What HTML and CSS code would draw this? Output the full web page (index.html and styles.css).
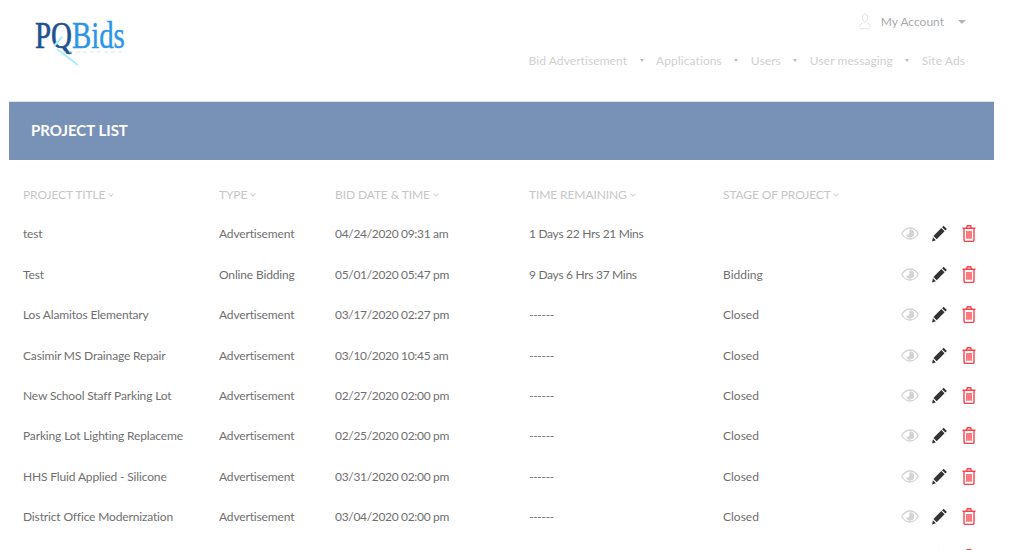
FILE: index.html
```html
<!DOCTYPE html>
<html lang="en">
<head>
<meta charset="utf-8">
<title>Project List</title>
<link rel="stylesheet" href="styles.css">
</head>
<body>
<svg class="sprite" width="0" height="0" aria-hidden="true">
  <symbol id="eye" viewBox="0 0 18 13">
    <path d="M.7 6.500C2.800 2.900 5.700 1 9 1s6.200 1.900 8.300 5.500C15.200 10.100 12.300 12 9 12S2.800 10.100.7 6.500z" fill="none" stroke="currentColor" stroke-width="1.300"/>
    <path d="M9 2.300a4.200 4.200 0 1 1-4 5.500c1.900.3 3.300-.7 3.400-2.400.1-1.100-.2-2.200.6-3.100z" fill="currentColor"/>
  </symbol>
  <symbol id="pencil" viewBox="0 0 16 17">
    <path d="M11.600.8l3.300 3.200-1.500 1.500-3.300-3.200zM9.300 3.100l3.300 3.200-7.900 8-3.300-3.200zM.9 12.300l3 2.900-3.800 1.300z" fill="currentColor"/>
  </symbol>
  <symbol id="trash" viewBox="0 0 14 17">
    <path d="M.5 3.300h13M4.600 3.100l.7-2.300h3.400l.7 2.300M2 3.600v11.500c0 .8.500 1.300 1.200 1.300h7.600c.7 0 1.200-.5 1.200-1.300V3.600M5 6v7.800M7 6v7.800M9 6v7.800" fill="none" stroke="currentColor" stroke-width="1.400"/>
  </symbol>
</svg>

<header class="site-header">
  <a class="logo" href="#">
    <span class="logo-text"><span class="logo-pq">PQ</span><span class="logo-bids">Bids</span></span>
    <svg class="logo-glass" width="80" height="34" viewBox="0 0 80 34" aria-hidden="true">
      <path d="M12 2 4 11M7 14 28 30" stroke="#a9eef8" stroke-width="2" fill="none"/>
      <path d="M12 17H76" stroke="#d5e6f2" stroke-width="1" stroke-dasharray="4 3" fill="none"/>
    </svg>
  </a>
  <div class="header-right">
    <div class="account">
      <svg class="account-icon" width="12" height="17" viewBox="0 0 12 17" aria-hidden="true">
        <path d="M3.500 4.500C3.500 2.500 4.500 1 6 1s2.500 1.500 2.500 3.500S7.500 9 6 9 3.500 6.500 3.500 4.500zM.8 14c0-2.500 2-4 3.300-4.300M11.200 14c0-2.500-2-4-3.300-4.300M.8 15.800h10.400" fill="none" stroke="#e4e4e4" stroke-width="1"/>
      </svg>
      <span>My Account</span>
      <i class="caret caret-lg"></i>
    </div>
    <nav class="main-nav">
      <a href="#">Bid Advertisement</a><i class="caret"></i>
      <a href="#">Applications</a><i class="caret"></i>
      <a href="#">Users</a><i class="caret"></i>
      <a href="#">User messaging</a><i class="caret"></i>
      <a href="#">Site Ads</a>
    </nav>
  </div>
</header>

<main class="panel">
  <h1 class="banner">PROJECT LIST</h1>
  <div class="table">
    <div class="row head">
      <div>PROJECT TITLE <i class="chev"></i></div>
      <div>TYPE <i class="chev"></i></div>
      <div>BID DATE &amp; TIME <i class="chev"></i></div>
      <div>TIME REMAINING <i class="chev"></i></div>
      <div>STAGE OF PROJECT <i class="chev"></i></div>
      <div></div>
    </div>
    <div class="row">
      <div>test</div><div>Advertisement</div><div>04/24/2020 09:31 am</div><div>1 Days 22 Hrs 21 Mins</div><div></div>
      <div class="actions"><svg class="ic-eye"><use href="#eye"/></svg><svg class="ic-pencil"><use href="#pencil"/></svg><svg class="ic-trash"><use href="#trash"/></svg></div>
    </div>
    <div class="row">
      <div>Test</div><div>Online Bidding</div><div>05/01/2020 05:47 pm</div><div>9 Days 6 Hrs 37 Mins</div><div>Bidding</div>
      <div class="actions"><svg class="ic-eye"><use href="#eye"/></svg><svg class="ic-pencil"><use href="#pencil"/></svg><svg class="ic-trash"><use href="#trash"/></svg></div>
    </div>
    <div class="row">
      <div>Los Alamitos Elementary</div><div>Advertisement</div><div>03/17/2020 02:27 pm</div><div>------</div><div>Closed</div>
      <div class="actions"><svg class="ic-eye"><use href="#eye"/></svg><svg class="ic-pencil"><use href="#pencil"/></svg><svg class="ic-trash"><use href="#trash"/></svg></div>
    </div>
    <div class="row">
      <div>Casimir MS Drainage Repair</div><div>Advertisement</div><div>03/10/2020 10:45 am</div><div>------</div><div>Closed</div>
      <div class="actions"><svg class="ic-eye"><use href="#eye"/></svg><svg class="ic-pencil"><use href="#pencil"/></svg><svg class="ic-trash"><use href="#trash"/></svg></div>
    </div>
    <div class="row">
      <div>New School Staff Parking Lot</div><div>Advertisement</div><div>02/27/2020 02:00 pm</div><div>------</div><div>Closed</div>
      <div class="actions"><svg class="ic-eye"><use href="#eye"/></svg><svg class="ic-pencil"><use href="#pencil"/></svg><svg class="ic-trash"><use href="#trash"/></svg></div>
    </div>
    <div class="row">
      <div>Parking Lot Lighting Replaceme</div><div>Advertisement</div><div>02/25/2020 02:00 pm</div><div>------</div><div>Closed</div>
      <div class="actions"><svg class="ic-eye"><use href="#eye"/></svg><svg class="ic-pencil"><use href="#pencil"/></svg><svg class="ic-trash"><use href="#trash"/></svg></div>
    </div>
    <div class="row">
      <div>HHS Fluid Applied - Silicone</div><div>Advertisement</div><div>03/31/2020 02:00 pm</div><div>------</div><div>Closed</div>
      <div class="actions"><svg class="ic-eye"><use href="#eye"/></svg><svg class="ic-pencil"><use href="#pencil"/></svg><svg class="ic-trash"><use href="#trash"/></svg></div>
    </div>
    <div class="row">
      <div>District Office Modernization</div><div>Advertisement</div><div>03/04/2020 02:00 pm</div><div>------</div><div>Closed</div>
      <div class="actions"><svg class="ic-eye"><use href="#eye"/></svg><svg class="ic-pencil"><use href="#pencil"/></svg><svg class="ic-trash"><use href="#trash"/></svg></div>
    </div>
    <div class="row">
      <div></div><div></div><div></div><div></div><div></div>
      <div class="actions"><svg class="ic-eye ic-hidden"><use href="#eye"/></svg><svg class="ic-pencil"><use href="#pencil"/></svg><svg class="ic-trash"><use href="#trash"/></svg></div>
    </div>
  </div>
</main>
</body>
</html>
```

FILE: styles.css
```css
* { box-sizing: border-box; }

html, body {
  height: 550px;
  overflow: hidden;
}

body {
  margin: 0;
  background: #fff;
  font-family: Lato, "Open Sans", sans-serif;
  font-size: 12px;
  color: #6f6f6f;
}

.sprite { position: absolute; }

.site-header {
  height: 101px;
  display: flex;
  justify-content: space-between;
  padding: 12px 59px 0 35px;
}

.logo {
  position: relative;
  display: block;
  width: 90px;
  height: 40px;
  text-decoration: none;
}

.logo-text {
  display: block;
  width: 115px;
  margin-top: 6px;
  font-family: "Liberation Serif", serif;
  font-size: 37px;
  line-height: 36px;
  white-space: nowrap;
  transform: scaleX(.78);
  transform-origin: left center;
}

.logo-pq {
  color: #1f5290;
  -webkit-text-stroke: .7px #1f5290;
}

.logo-bids {
  color: #2b95e8;
  -webkit-text-stroke: .4px #2b95e8;
}

.logo-glass {
  position: absolute;
  left: 15px;
  top: 23px;
}

.header-right {
  display: flex;
  flex-direction: column;
  align-items: flex-end;
}

.account {
  display: flex;
  align-items: center;
  height: 18px;
  color: #a9a9a9;
  margin-right: -1px;
}

.account-icon { margin-right: 10px; }

.main-nav {
  display: flex;
  align-items: center;
  margin-top: 21px;
  height: 18px;
  color: #cfcfcf;
  letter-spacing: .08px;
}

.main-nav a {
  color: inherit;
  text-decoration: none;
}

.caret {
  display: block;
  width: 0;
  height: 0;
  margin: 1px 12.500px 0;
  border: 2.500px solid transparent;
  border-top: 3px solid #bdbdbd;
  border-bottom: 0;
}

.caret-lg {
  margin: 1px 0 0 14px;
  border-width: 4px 4px 0;
  border-top-color: #b5b5b5;
  border-left-color: transparent;
  border-right-color: transparent;
}

.panel { padding: 0 30px 0 9px; }

.banner {
  margin: 0;
  height: 59px;
  padding: 0 0 2px 22px;
  display: flex;
  align-items: center;
  background: #7892b7;
  color: #fff;
  font-size: 15px;
  font-weight: 700;
  border-top: 1px solid #dfe3ea;
}

.table { padding: 13.600px 17px 0 14px; }

.row {
  display: grid;
  grid-template-columns: 196px 116px 194px 194px 1fr 76px;
  align-items: center;
  height: 40.430px;
  white-space: nowrap;
}

.row:not(.head) > :nth-child(1) { letter-spacing: -.15px; }
.row:not(.head) > :nth-child(2) { letter-spacing: -.15px; }
.row:not(.head) > :nth-child(3) { letter-spacing: -.32px; }
.row:not(.head) > :nth-child(4) { letter-spacing: -.3px; }

.head {
  height: 40px;
  padding-top: 2px;
  color: #c6c6c6;
  letter-spacing: -.1px;
}

.chev {
  display: inline-block;
  width: 4px;
  height: 4px;
  margin: 0 0 3px 1px;
  border-right: 1px solid #d4d4d4;
  border-bottom: 1px solid #d4d4d4;
  transform: rotate(45deg);
}

.actions {
  display: flex;
  align-items: center;
}

.ic-eye {
  width: 18px;
  height: 13px;
  color: #d4d4d4;
  margin-right: 13px;
}

.ic-hidden { visibility: hidden; }

.ic-pencil {
  width: 16px;
  height: 17px;
  color: #333;
  margin-right: 14px;
}

.ic-trash {
  width: 14px;
  height: 17px;
  color: #f9424a;
}
```
